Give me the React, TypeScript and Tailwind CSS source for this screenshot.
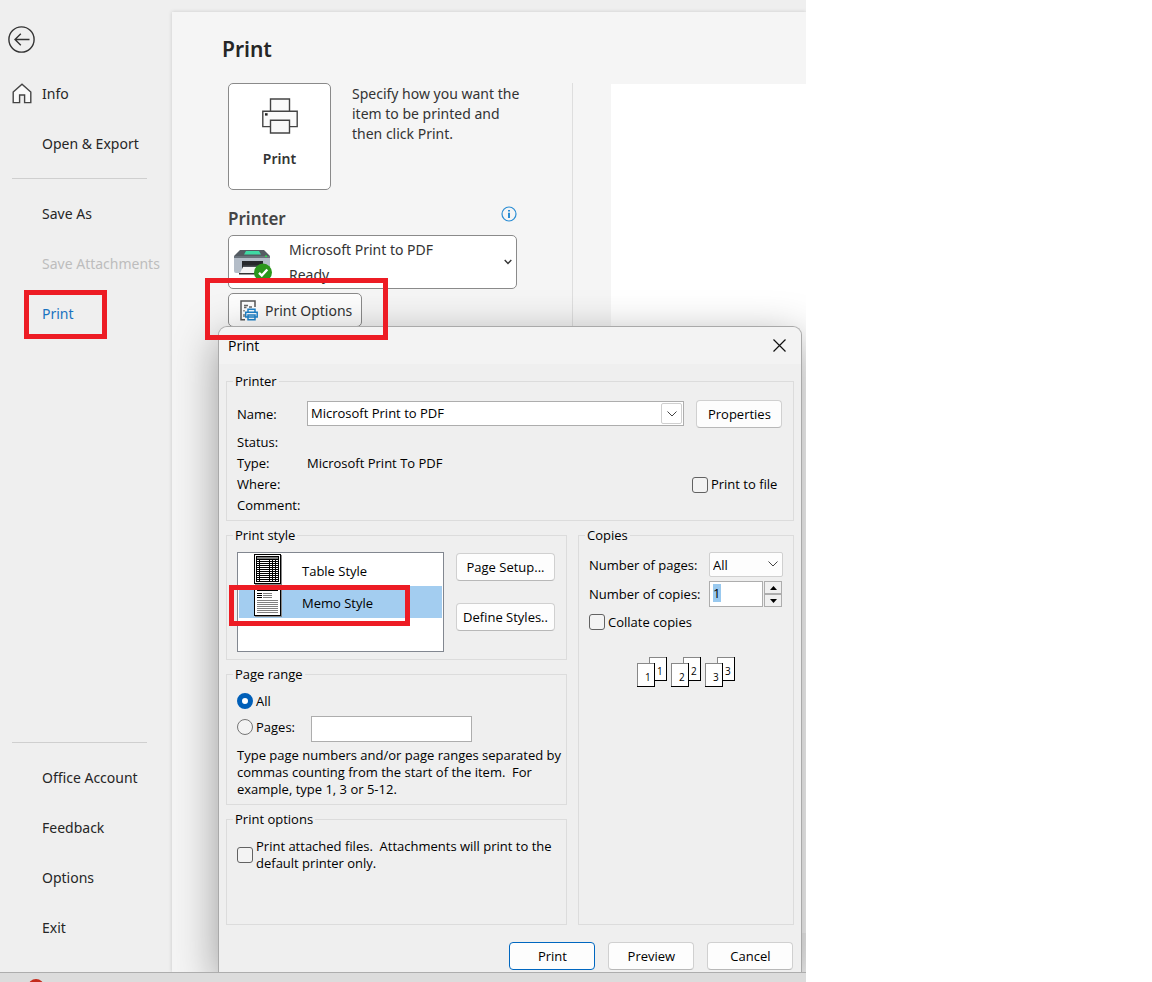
import { useState } from "react";
import type { ReactNode } from "react";

const BUTTON =
  "h-7 rounded border border-[#d0d0d0] border-b-[#b8b8b8] bg-[#fdfdfd] pt-0.5 text-center whitespace-nowrap";
const CHECKBOX =
  "size-4 shrink-0 appearance-none rounded-[3px] border border-[#626262] bg-[#f3f3f3] checked:bg-[#005fb8]";
const RADIO =
  "size-4 shrink-0 appearance-none rounded-full border border-[#767676] bg-[#f3f3f3] checked:border-[5px] checked:border-[#005fb8] checked:bg-white";

function NavItem({ label, tone = "text-[#262626]", icon }: { label: string; tone?: string; icon?: ReactNode }) {
  return (
    <a href="#" className={`flex h-[50px] items-center pl-3 whitespace-nowrap ${tone}`}>
      <span className="w-[30px] shrink-0">{icon}</span>
      {label}
    </a>
  );
}

function Group({ title, className = "", children }: { title: string; className?: string; children: ReactNode }) {
  return (
    <fieldset className={`min-w-0 border border-[#dcdcdc] px-2.5 ${className}`}>
      <legend className="-ml-1 px-0.5 leading-4">{title}</legend>
      {children}
    </fieldset>
  );
}

function HomeIcon() {
  return (
    <svg width="20" height="21" viewBox="0 0 20 21" fill="none" stroke="#444" strokeWidth="1.4">
      <path d="M1.2 9 10 1.2 18.8 9V19.6H12.6V12H7.6V19.6H1.2Z" fill="#fafafa" />
    </svg>
  );
}

function PrinterOutline() {
  return (
    <svg width="36" height="36" viewBox="0 0 36 36" fill="#fafafa" stroke="#444" strokeWidth="1.4">
      <path d="M8.5 13V1H27.5V13" />
      <path d="M.8 13.3H35.2V28.6H.8Z" />
      <path d="M8.5 22.3H27.5V35H8.5Z" />
      <path d="M3 15.2H5.6V17.6H3Z" fill="#222" stroke="none" />
    </svg>
  );
}

function PrinterPhoto() {
  return (
    <svg width="40" height="34" viewBox="0 0 40 34">
      <path d="M6 2H30L36 8V10H0V8Z" fill="#555c63" />
      <path d="M12 3H25L27 6.5H10Z" fill="#3fd9a4" />
      <path d="M0 8H36V23Q36 25 34 25H2Q0 25 0 23Z" fill="#b4bdc8" />
      <path d="M0 8H36V10H0Z" fill="#69727b" />
      <path d="M31 7.5H33V9H31Z" fill="#2fe050" />
      <path d="M8 13H29V22H8Z" fill="#26282b" />
      <path d="M9 19H28L30 25H6Z" fill="#f4f4f4" />
      <path d="M9 17.5H28V19H9Z" fill="#4a4e54" />
      <path d="M5 25H30V26.5H5Z" fill="#333" />
      <circle cx="29" cy="24.5" r="9" fill="#2b961c" />
      <path d="M25 24.8 27.8 27.5 33.3 21.5" fill="none" stroke="#fff" strokeWidth="2.4" />
    </svg>
  );
}

function PrintOptionsIcon() {
  return (
    <svg width="18" height="21" viewBox="0 0 18 21" fill="none">
      <path d="M5 19.8H1V1H15V7" stroke="#555" strokeWidth="1.5" />
      <path d="M4 5.5H8M4 7.5H6.5M9 7H12M4 10V11.5M4 14V17" stroke="#666" strokeWidth="1.3" />
      <path d="M8 12V9.2H15V12M5.7 12.2H17.2V17H5.7ZM8 15H15V19.8H8Z" stroke="#1f82c8" strokeWidth="1.5" fill="#f5faff" />
    </svg>
  );
}

function TableStyleIcon() {
  return (
    <svg width="28" height="31" viewBox="0 0 28 31" shapeRendering="crispEdges">
      <path d="M1 1H28V31H1Z" fill="#888" />
      <path d="M0 0H27V30H0Z" fill="#000" />
      <path d="M1 1H26V29H1Z" fill="#fff" />
      <path d="M2 2H25V28H2Z" fill="#000" />
      <path d="M3 3H24V5H3Z" fill="#808080" />
      <path
        d="M3 6.5H24M3 8.5H24M3 10.5H24M3 12.5H24M3 14.5H24M3 16.5H24M3 18.5H24M3 20.5H24M3 22.5H24M3 24.5H24M3 26.5H24"
        stroke="#fff"
      />
      <path d="M5.5 6V28M15.5 6V28M18.5 6V28M21.5 6V28" stroke="#000" />
    </svg>
  );
}

function MemoStyleIcon() {
  return (
    <svg width="28" height="31" viewBox="0 0 28 31" shapeRendering="crispEdges">
      <path d="M1 1H28V31H1Z" fill="#888" />
      <path d="M0 0H27V30H0Z" fill="#000" />
      <path d="M1 1H26V29H1Z" fill="#fff" />
      <path d="M3 4.5H24M3 7.5H8M3 9.5H8M3 11.5H8" stroke="#000" />
      <path d="M9 7.5H18M9 9.5H18M9 11.5H18M3 14.5H24M3 16.5H24M3 18.5H24M3 20.5H24M3 22.5H24M3 24.5H24M3 26.5H24" stroke="#808080" />
    </svg>
  );
}

function CopySheets() {
  return (
    <svg width="98" height="30" viewBox="0 0 98 30" shapeRendering="crispEdges" className="font-['Open_Sans']">
      {[1, 2, 3].map((n, i) => (
        <g key={n} transform={`translate(${i * 34} 0)`}>
          <path d="M12 0H30V24H12Z" fill="#000" />
          <path d="M12 0H29V23H12Z" fill="#888" />
          <path d="M13 1H29V23H13Z" fill="#fff" />
          <text x="20" y="18" fontSize="10">{n}</text>
          <path d="M0 6H18V30H0Z" fill="#000" />
          <path d="M0 6H17V29H0Z" fill="#888" />
          <path d="M1 7H17V29H1Z" fill="#fff" />
          <text x="8" y="24" fontSize="10">{n}</text>
        </g>
      ))}
    </svg>
  );
}

function Chevron({ className = "" }: { className?: string }) {
  return (
    <svg width="10" height="6" viewBox="0 0 10 6" fill="none" stroke="#444" className={className}>
      <path d="M.5 .5 5 5 9.5 .5" />
    </svg>
  );
}

function Sidebar() {
  return (
    <nav className="flex w-[172px] shrink-0 flex-col pb-5 text-[14px]">
      <button aria-label="Back" className="mt-[26px] mb-[15px] ml-2 self-start">
        <svg width="27" height="27" viewBox="0 0 27 27" fill="none" stroke="#333" strokeWidth="1.4">
          <circle cx="13.5" cy="13.5" r="12.6" />
          <path d="M21.5 13.5H7M12.8 7.7 7 13.5 12.8 19.3" />
        </svg>
      </button>
      <NavItem label="Info" icon={<HomeIcon />} />
      <NavItem label="Open & Export" />
      <hr className="mt-[10px] mr-[25px] mb-[9px] ml-3 border-[#cfcfcf]" />
      <NavItem label="Save As" />
      <NavItem label="Save Attachments" tone="text-[#bdbdbd]" />
      <NavItem label="Print" tone="text-[#1a73c0]" />
      <hr className="mt-auto mr-[25px] mb-[9px] ml-3 border-[#cfcfcf]" />
      <NavItem label="Office Account" />
      <NavItem label="Feedback" />
      <NavItem label="Options" />
      <NavItem label="Exit" />
    </nav>
  );
}

function PrintPane() {
  return (
    <main className="mt-3 flex min-w-0 flex-1 bg-[#f5f5f5] text-[14px] text-[#333] shadow-[0_0_4px_rgba(0,0,0,0.16)]">
      <section className="w-[400px] shrink-0 pl-14">
        <h1 className="-ml-1.5 pt-[21px] text-[21px] leading-8 font-semibold text-[#262626]">Print</h1>
        <div className="mt-[18px] flex gap-[21px]">
          <button className="flex h-[107px] w-[103px] shrink-0 flex-col items-center rounded-[5px] border border-[#8a8a8a] bg-white pt-[14px] font-semibold text-[#333]">
            <PrinterOutline />
            <span className="mt-[15px] leading-5">Print</span>
          </button>
          <p className="w-[180px] pt-px leading-5">Specify how you want the item to be printed and then click Print.</p>
        </div>
        <div className="mt-4 flex items-start justify-between">
          <h2 className="text-[17px] leading-[26px] font-semibold text-[#444]">Printer</h2>
          <svg width="16" height="16" viewBox="0 0 16 16" fill="none" stroke="#2a8dd4" className="mr-[55px]">
            <circle cx="8" cy="8" r="7" strokeWidth="1.2" />
            <path d="M8 6.8V12M8 4V5.6" strokeWidth="2" />
          </svg>
        </div>
        <button
          aria-haspopup="listbox"
          className="mt-[3px] flex h-[54px] w-[289px] items-start rounded-[5px] border border-[#8a8a8a] bg-white pr-1 pl-[5px] text-left"
        >
          <span className="w-[55px] shrink-0 pt-3"><PrinterPhoto /></span>
          <span className="flex-1 pt-px leading-[25px]">
            Microsoft Print to PDF
            <br />
            Ready
          </span>
          <svg width="8" height="6" viewBox="0 0 8 6" fill="none" stroke="#333" strokeWidth="1.4" className="self-center">
            <path d="M.7 1 4 4.4 7.3 1" />
          </svg>
        </button>
        <button className="mt-1 flex h-[34px] w-[134px] items-center gap-[7px] rounded-[5px] border border-[#8a8a8a] bg-[#fdfdfd] pl-[11px] whitespace-nowrap">
          <PrintOptionsIcon />
          Print Options
        </button>
      </section>
      <div className="mt-[71px] w-px bg-[#dedede]" />
      <div className="mt-[72px] mb-[39px] ml-[38px] flex-1 bg-white" />
    </main>
  );
}

function PrinterGroup() {
  return (
    <Group title="Printer" className="pt-3 pb-1">
      <div className="flex h-[27px] items-start pr-px">
        <label htmlFor="printer-name" className="w-[70px] shrink-0 leading-[26px]">Name:</label>
        <div className="relative mr-3 flex h-[25px] flex-1 border border-[#adadad] bg-white">
          <select id="printer-name" className="w-full appearance-none pl-[3px]">
            <option>Microsoft Print to PDF</option>
          </select>
          <span className="pointer-events-none absolute inset-y-px right-px flex w-[21px] items-center justify-center rounded-[2px] border border-[#cfcfcf]">
            <Chevron />
          </span>
        </div>
        <button className={`${BUTTON} -mt-px w-[86px]`}>Properties</button>
      </div>
      <dl className="mt-1 grid grid-cols-[70px_1fr_auto] leading-[21px]">
        <dt>Status:</dt>
        <dd className="col-span-2" />
        <dt>Type:</dt>
        <dd className="col-span-2">Microsoft Print To PDF</dd>
        <dt>Where:</dt>
        <dd className="col-span-2 flex justify-end pr-1.5">
          <label className="flex items-center gap-[3px]">
            <input type="checkbox" className={CHECKBOX} />
            Print to file
          </label>
        </dd>
        <dt>Comment:</dt>
        <dd className="col-span-2" />
      </dl>
    </Group>
  );
}

function StyleGroup() {
  const [selected, setSelected] = useState("Memo Style");
  const styles = [
    { name: "Table Style", icon: <TableStyleIcon /> },
    { name: "Memo Style", icon: <MemoStyleIcon /> },
  ];
  return (
    <Group title="Print style" className="pt-[9px] pb-[7px]">
      <div className="flex gap-3 pr-px">
        <div role="listbox" aria-label="Print style" className="h-[100px] min-w-0 flex-1 border border-[#828790] bg-white p-px">
          {styles.map((s) => (
            <button
              key={s.name}
              role="option"
              aria-selected={selected === s.name}
              onClick={() => setSelected(s.name)}
              className={`flex h-8 w-full items-start gap-5 pl-[15px] ${selected === s.name ? "bg-[#a3cdf0]" : ""}`}
            >
              {s.icon}
              <span className="leading-[34px]">{s.name}</span>
            </button>
          ))}
        </div>
        <div className="flex w-[99px] flex-col gap-[22px] pt-px">
          <button className={BUTTON}>Page Setup...</button>
          <button className={BUTTON}>Define Styles..</button>
        </div>
      </div>
    </Group>
  );
}

function RangeGroup() {
  return (
    <Group title="Page range" className="pt-[9px] pb-1.5">
      <label className="flex h-5 items-center gap-[3px]">
        <input type="radio" name="range" defaultChecked className={RADIO} />
        <span className="pt-0.5">All</span>
      </label>
      <div className="mt-[5px] flex">
        <label className="flex h-[22px] w-[74px] items-center gap-[3px]">
          <input type="radio" name="range" className={RADIO} />
          <span className="pt-0.5">Pages:</span>
        </label>
        <input type="text" aria-label="Page numbers" className="h-[26px] w-[161px] border border-[#adadad] bg-white px-1" />
      </div>
      <p className="mt-[5px] leading-[17px] whitespace-pre">
        {"Type page numbers and/or page ranges separated by\ncommas counting from the start of the item.  For\nexample, type 1, 3 or 5-12."}
      </p>
    </Group>
  );
}

function CopiesGroup() {
  return (
    <Group title="Copies" className="flex-1 pt-[9px]">
      <div className="grid grid-cols-[120px_74px] items-center gap-y-1">
        <label htmlFor="page-count" className="pt-0.5">Number of pages:</label>
        <div className="relative">
          <select id="page-count" className="block h-[25px] w-full appearance-none rounded-[2px] border border-[#d0d0d0] bg-[#fdfdfd] pt-0.5 pl-[3px]">
            <option>All</option>
          </select>
          <Chevron className="pointer-events-none absolute top-[9px] right-[5px]" />
        </div>
        <label htmlFor="copy-count" className="pt-px">Number of copies:</label>
        <div className="flex h-[26px]">
          <div className="flex w-[54px] items-start border border-[#adadad] bg-white pt-0.5 pl-[3px]">
            <input id="copy-count" type="text" defaultValue="1" className="h-[18px] w-2 bg-[#99c9ef] leading-[18px]" />
          </div>
          <div className="ml-px flex w-[18px] flex-col">
            <button aria-label="Increase" className="flex flex-1 items-center justify-center border border-[#adadad] bg-[#f0f0f0]">
              <svg width="7" height="4" viewBox="0 0 7 4"><path d="M0 4 3.5 0 7 4Z" /></svg>
            </button>
            <button aria-label="Decrease" className="flex flex-1 items-center justify-center border border-[#adadad] bg-[#f0f0f0]">
              <svg width="7" height="4" viewBox="0 0 7 4"><path d="M0 0H7L3.5 4Z" /></svg>
            </button>
          </div>
        </div>
      </div>
      <label className="mt-1 flex h-[22px] items-center gap-[3px]">
        <input type="checkbox" className={CHECKBOX} />
        <span className="pt-0.5">Collate copies</span>
      </label>
      <div className="mt-6 flex justify-center">
        <CopySheets />
      </div>
    </Group>
  );
}

function PrintDialog() {
  return (
    <div
      role="dialog"
      aria-label="Print"
      className="absolute top-[326px] right-1 bottom-0 left-[218px] rounded-t-[9px] border border-b-0 border-[#a9a9a9] bg-[#efefef] font-['Open_Sans',sans-serif] text-[13px] text-black shadow-[0_12px_44px_rgba(0,0,0,0.38)]"
    >
      <header className="flex h-[37px] items-center justify-between rounded-t-[9px] bg-[#f3f3f3] pr-[15px] pl-[9px] text-[14px]">
        <span>Print</span>
        <button aria-label="Close">
          <svg width="13" height="13" viewBox="0 0 13 13" fill="none" stroke="#111" strokeWidth="1.2">
            <path d="M.5 .5 12.5 12.5M12.5 .5 .5 12.5" />
          </svg>
        </button>
      </header>
      <div className="flex flex-col gap-1.5 px-[7px] pt-[9px]">
        <PrinterGroup />
        <div className="flex gap-[11px]">
          <div className="flex w-[341px] shrink-0 flex-col gap-1.5">
            <StyleGroup />
            <RangeGroup />
            <Group title="Print options" className="pt-[11px] pb-[52px]">
              <label className="flex items-center gap-[3px] leading-[17px] whitespace-nowrap">
                <input type="checkbox" className={CHECKBOX} />
                <span>
                  Print attached files.&nbsp; Attachments will print to the
                  <br />
                  default printer only.
                </span>
              </label>
            </Group>
          </div>
          <CopiesGroup />
        </div>
      </div>
      <div className="mt-[17px] flex justify-end gap-[13px] pr-2">
        <button className="h-7 w-[86px] rounded border border-[#0067c0] bg-[#fdfdfd] pt-0.5">Print</button>
        <button className={`${BUTTON} w-[86px]`}>Preview</button>
        <button className={`${BUTTON} w-[86px]`}>Cancel</button>
      </div>
    </div>
  );
}

export default function App() {
  return (
    <div className="min-h-screen bg-white font-['Noto_Sans',sans-serif]">
      <div className="flex min-h-screen w-[70%] flex-col overflow-hidden bg-[#efefef]">
        <div className="relative flex flex-1">
          <Sidebar />
          <PrintPane />
          <PrintDialog />
          <div className="pointer-events-none absolute top-[290px] left-6 h-[49px] w-[83px] border-[5px] border-[#ed1c24]" />
          <div className="pointer-events-none absolute top-[278px] left-[205px] h-[62px] w-[183px] border-[5px] border-[#ed1c24]" />
          <div className="pointer-events-none absolute top-[585px] left-[229px] h-[41px] w-[181px] border-[5px] border-[#ed1c24]" />
        </div>
        <footer className="relative h-[10px] overflow-hidden border-t border-[#adadad] bg-[#dcdcdc] pt-1.5 pl-7">
          <div className="size-4 rounded-full bg-[#c42b1c]" />
        </footer>
      </div>
    </div>
  );
}
